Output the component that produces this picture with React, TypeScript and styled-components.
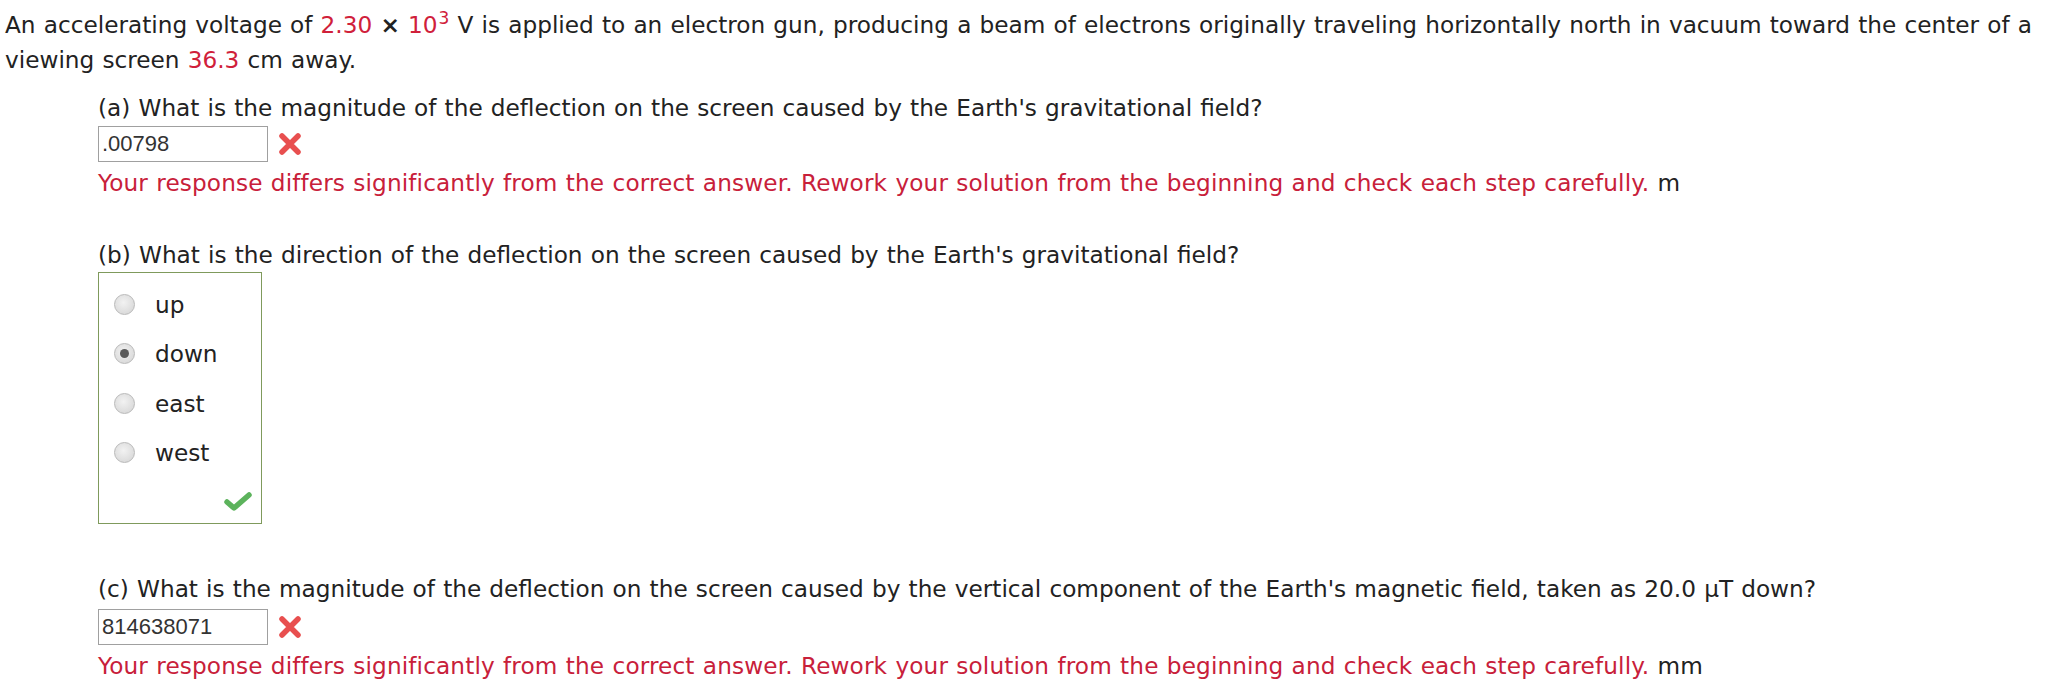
import React from 'react';
import styled, { createGlobalStyle } from 'styled-components';

const GlobalStyle = createGlobalStyle`
  body {
    margin: 0;
    background: #fff;
    color: #222;
    font-family: "DejaVu Sans", Verdana, sans-serif;
  }
`;

const Page = styled.div`
  padding: 7px 5px 0 5px;
  font-size: 23.2px;
  word-spacing: 0.8px;
`;

const Intro = styled.div`
  line-height: 35px;
`;

const Value = styled.span`
  color: #d0203a;
`;

const Times = styled.span`
  font-weight: bold;
`;

const Sup = styled.sup`
  color: #d0203a;
  font-size: 17px;
  line-height: 0;
  vertical-align: 9px;
  margin-left: 1px;
`;

const Parts = styled.div`
  margin-left: 93px;
`;

const Part = styled.div<{ $gap: number }>`
  margin-top: ${(p) => p.$gap}px;
`;

const Question = styled.div`
  line-height: 35px;
`;

const AnswerRow = styled.div<{ $top: number }>`
  display: flex;
  align-items: center;
  gap: 10px;
  margin-top: ${(p) => p.$top}px;
  height: 36px;
`;

const Input = styled.input`
  box-sizing: border-box;
  width: 170px;
  height: 36px;
  border: 1px solid #a0a0a0;
  padding: 0 3px;
  font-family: "Liberation Sans", Arial, sans-serif;
  font-size: 22px;
  color: #333;
  outline: none;
`;

const Feedback = styled.div`
  margin-top: 3px;
  line-height: 35px;
  letter-spacing: 0.12px;
  color: #c8203a;
`;

const Unit = styled.span`
  color: #222;
`;

const ChoiceBox = styled.div`
  box-sizing: border-box;
  width: 164px;
  height: 252px;
  border: 1px solid #7f9a5c;
  padding: 7px 0 0 15px;
  display: flex;
  flex-direction: column;
`;

const Choice = styled.label`
  display: flex;
  align-items: center;
  gap: 20px;
  height: 49.3px;
`;

const Radio = styled.span<{ $on?: boolean }>`
  box-sizing: border-box;
  width: 21px;
  height: 21px;
  border-radius: 50%;
  border: 1px solid #b9b9b9;
  background: radial-gradient(circle at 45% 40%, #f2f2f2 0%, #dcdcdc 70%, #cfcfcf 100%);
  display: flex;
  align-items: center;
  justify-content: center;
  &::after {
    content: '';
    display: ${(p) => (p.$on ? 'block' : 'none')};
    width: 9px;
    height: 9px;
    border-radius: 50%;
    background: #5a5a5a;
  }
`;

const CheckRow = styled.div`
  display: flex;
  justify-content: flex-end;
  padding: 14px 9px 0 0;
`;

const CrossIcon = () => (
  <svg width="24" height="22" viewBox="0 0 24 22">
    <path d="M4 3 L20 19 M20 3 L4 19" stroke="#e84f4f" strokeWidth="5.5" strokeLinecap="round" />
  </svg>
);

const CheckIcon = () => (
  <svg width="28" height="21" viewBox="0 0 28 21">
    <path d="M3 11 L10 17 L25 4" fill="none" stroke="#5cb35c" strokeWidth="5.5" strokeLinecap="round" strokeLinejoin="round" />
  </svg>
);

const wrong =
  'Your response differs significantly from the correct answer. Rework your solution from the beginning and check each step carefully.';

const choices = ['up', 'down', 'east', 'west'];

const App = () => (
  <Page>
    <GlobalStyle />
    <Intro>
      An accelerating voltage of <Value>2.30</Value> <Times>×</Times> <Value>10</Value>
      <Sup>3</Sup> V is applied to an electron gun, producing a beam of electrons originally traveling
      horizontally north in vacuum toward the center of a viewing screen <Value>36.3</Value> cm away.
    </Intro>
    <Parts>
      <Part $gap={13}>
        <Question>(a) What is the magnitude of the deflection on the screen caused by the Earth's gravitational field?</Question>
        <AnswerRow $top={1}>
          <Input defaultValue=".00798" />
          <CrossIcon />
        </AnswerRow>
        <Feedback>
          {wrong} <Unit>m</Unit>
        </Feedback>
      </Part>
      <Part $gap={37}>
        <Question>(b) What is the direction of the deflection on the screen caused by the Earth's gravitational field?</Question>
        <ChoiceBox>
          {choices.map((c) => (
            <Choice key={c}>
              <Radio $on={c === 'down'} />
              {c}
            </Choice>
          ))}
          <CheckRow>
            <CheckIcon />
          </CheckRow>
        </ChoiceBox>
      </Part>
      <Part $gap={47}>
        <Question>(c) What is the magnitude of the deflection on the screen caused by the vertical component of the Earth's magnetic field, taken as 20.0 μT down?</Question>
        <AnswerRow $top={3}>
          <Input defaultValue="814638071" />
          <CrossIcon />
        </AnswerRow>
        <Feedback>
          {wrong} <Unit>mm</Unit>
        </Feedback>
      </Part>
    </Parts>
  </Page>
);

export default App;
